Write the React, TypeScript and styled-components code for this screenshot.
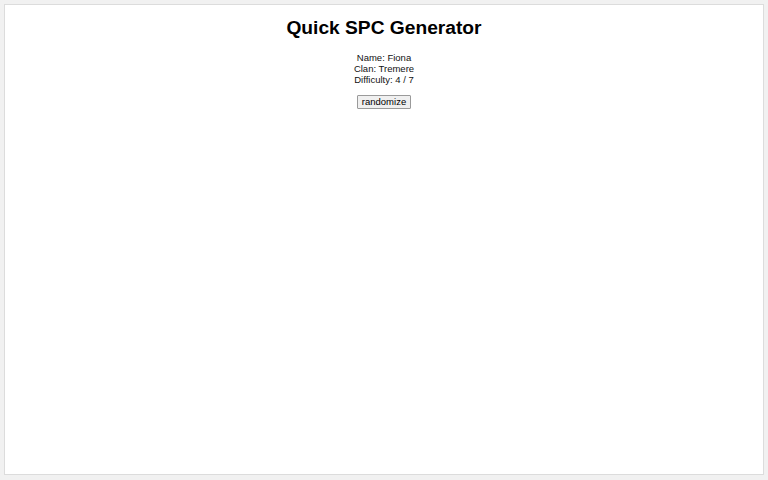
import React, { useState } from 'react';
import { styled, createGlobalStyle } from 'styled-components';

const names = ['Fiona', 'Marcus', 'Elena', 'Dorian', 'Sasha', 'Viktor'];
const clans = ['Tremere', 'Ventrue', 'Toreador', 'Brujah', 'Nosferatu', 'Malkavian'];

const pick = <T,>(list: T[]) => list[Math.floor(Math.random() * list.length)];

const GlobalStyle = createGlobalStyle`
  html, body {
    margin: 0;
    height: 100%;
    background: #f1f1f1;
  }
  body {
    font-family: 'Liberation Sans', Arial, sans-serif;
  }
  #root {
    height: 100%;
  }
`;

const Page = styled.div`
  box-sizing: border-box;
  height: 100%;
  padding: 4px 4px 5px 4px;
  display: flex;
`;

const Sheet = styled.main`
  flex: 1;
  background: #fff;
  border: 1px solid #dcdcdc;
  display: flex;
  flex-direction: column;
  align-items: center;
  padding-top: 12px;
`;

const Title = styled.h1`
  font-size: 19.2px;
  font-weight: 700;
  color: #000;
  margin: 0 0 13px 0;
  line-height: 22px;
`;

const Stats = styled.div`
  font-size: 9.5px;
  line-height: 11px;
  color: #111;
  text-align: center;
  margin-bottom: 10px;
`;

const RandomButton = styled.button`
  font-family: 'Liberation Sans', Arial, sans-serif;
  font-size: 9.5px;
  line-height: 11px;
  padding: 0 4px 1px;
  background: #f0f0f0;
  border: 1px solid #9a9a9a;
  border-radius: 1px;
  color: #000;
  cursor: pointer;
`;

const App = () => {
  const [spc, setSpc] = useState({ name: 'Fiona', clan: 'Tremere', difficulty: 4 });

  const randomize = () =>
    setSpc({ name: pick(names), clan: pick(clans), difficulty: 1 + Math.floor(Math.random() * 7) });

  return (
    <>
      <GlobalStyle />
      <Page>
        <Sheet>
          <Title>Quick SPC Generator</Title>
          <Stats>
            <div>Name: {spc.name}</div>
            <div>Clan: {spc.clan}</div>
            <div>Difficulty: {spc.difficulty} / 7</div>
          </Stats>
          <RandomButton onClick={randomize}>randomize</RandomButton>
        </Sheet>
      </Page>
    </>
  );
};

export default App;
